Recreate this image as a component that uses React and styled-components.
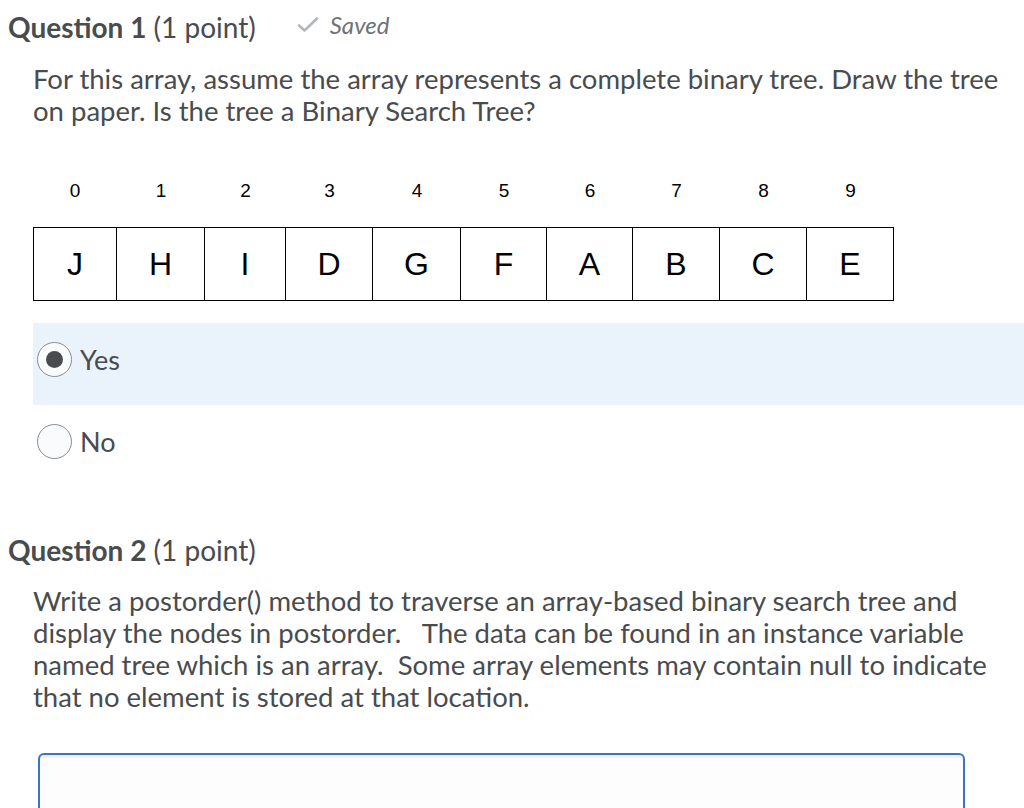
import React from "react";
import styled, { createGlobalStyle } from "styled-components";

const Global = createGlobalStyle`
  html, body { margin: 0; padding: 0; background: #fff; }
  body { font-family: Lato, "Noto Sans", sans-serif; color: #494c4e; }
`;

const Page = styled.div`
  width: 1024px;
  height: 808px;
  overflow: hidden;
  padding-top: 8px;
  box-sizing: border-box;
`;

const Header = styled.div`
  display: flex;
  align-items: center;
  padding-left: 8px;
  height: 38px;
  font-size: 28px;
  line-height: 38px;
  margin-top: ${(p) => p.$mt || 0}px;
`;

const Strong = styled.span`
  font-weight: 700;
`;

const Saved = styled.span`
  display: inline-flex;
  align-items: center;
  gap: 11px;
  margin-left: 41px;
  margin-top: -4px;
  font-size: 24px;
  line-height: 30px;
  font-style: italic;
  color: #6e7376;
`;

const Body = styled.div`
  padding-left: 33px;
`;

const Prompt = styled.p`
  margin: ${(p) => p.$mt || 0}px 0 0 0;
  font-size: 27.5px;
  line-height: 32px;
  white-space: nowrap;
`;

const Table = styled.div`
  margin-top: 53px;
  display: grid;
  grid-template-columns: 84px 88px 81px 87px 88px 86px 86px 87px 87px 87px;
  width: max-content;
  font-family: "Liberation Sans", Arial, sans-serif;
  color: #000;
`;

const IndexCell = styled.div`
  text-align: center;
  font-size: 19px;
  height: 47px;
  line-height: 22px;
`;

const ValueCell = styled.div`
  text-align: center;
  font-size: 32px;
  height: 74px;
  box-sizing: border-box;
  line-height: 72px;
  border: 1px solid #000;
  border-left-width: ${(p) => (p.$first ? 1 : 0)}px;
`;

const Options = styled.div`
  margin-top: 22px;
`;

const Option = styled.div`
  display: flex;
  align-items: center;
  gap: 8px;
  height: 82px;
  box-sizing: border-box;
  padding: 0 0 10px 4px;
  background: ${(p) => (p.$selected ? "#eaf2fc" : "transparent")};
  font-size: 27px;
`;

const Radio = styled.span`
  box-sizing: border-box;
  width: 35px;
  height: 35px;
  border-radius: 50%;
  border: 1px solid #8a8c8e;
  background: #fafbfd;
  display: flex;
  align-items: center;
  justify-content: center;
  &::after {
    content: "";
    display: ${(p) => (p.$checked ? "block" : "none")};
    width: 17px;
    height: 17px;
    border-radius: 50%;
    background: #494c4e;
  }
`;

const AnswerBox = styled.div`
  margin: 40px 0 0 5px;
  width: 927px;
  height: 80px;
  box-sizing: border-box;
  border: 2px solid #3a75c4;
  border-bottom: none;
  border-radius: 6px 6px 0 0;
  box-shadow: inset 0 3px 0 #f1f2f3;
  background: #fdfdfd;
`;

const idx = ["0", "1", "2", "3", "4", "5", "6", "7", "8", "9"];
const vals = ["J", "H", "I", "D", "G", "F", "A", "B", "C", "E"];

export default function App() {
  return (
    <Page>
      <Global />
      <Header>
        <Strong>Question 1</Strong>&nbsp;(1 point)
        <Saved>
          <svg width="22" height="16" viewBox="0 0 22 16">
            <path d="M2 8.5 L7.5 13.5 L20 1.5" fill="none" stroke="#b3b7ba" strokeWidth="2.6" strokeLinecap="round" strokeLinejoin="round" />
          </svg>
          Saved
        </Saved>
      </Header>
      <Body>
        <Prompt $mt={17}>
          For this array, assume the array represents a complete binary tree. Draw the tree
          <br />
          on paper. Is the tree a Binary Search Tree?
        </Prompt>
        <Table>
          {idx.map((i) => (
            <IndexCell key={i}>{i}</IndexCell>
          ))}
          {vals.map((v, n) => (
            <ValueCell key={v} $first={n === 0}>{v}</ValueCell>
          ))}
        </Table>
        <Options>
          <Option $selected>
            <Radio $checked />
            Yes
          </Option>
          <Option>
            <Radio />
            No
          </Option>
        </Options>
      </Body>
      <Header $mt={44}>
        <Strong>Question 2</Strong>&nbsp;(1 point)
      </Header>
      <Body>
        <Prompt $mt={16}>
          Write a postorder() method to traverse an array-based binary search tree and
          <br />
          display the nodes in postorder.&nbsp;&nbsp; The data can be found in an instance variable
          <br />
          named tree which is an array.&nbsp; Some array elements may contain null to indicate
          <br />
          that no element is stored at that location.
        </Prompt>
        <AnswerBox />
      </Body>
    </Page>
  );
}
